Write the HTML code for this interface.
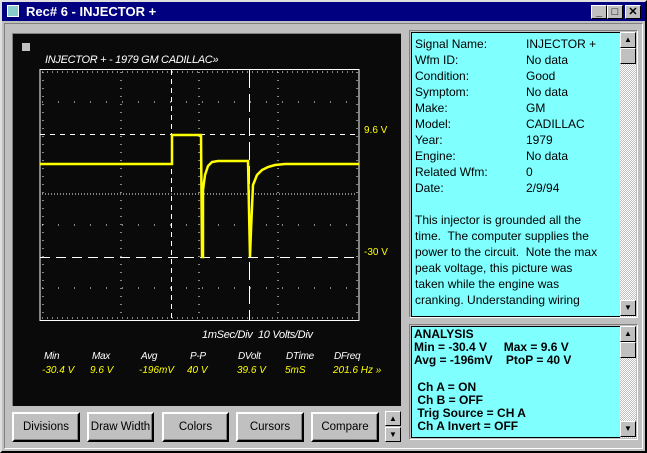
<!DOCTYPE html><html><head><style>
*{margin:0;padding:0;box-sizing:border-box}
body{width:647px;height:453px;background:#c0c0c0;position:relative;overflow:hidden;font-family:"Liberation Sans",sans-serif}
.a{position:absolute}
.tb{left:2px;top:2px;width:643px;height:19px;background:#000080;color:#fff;font-weight:bold;font-size:13px;line-height:19px;padding-left:24px}
.win{left:0;top:0;width:647px;height:453px;border:2px solid;border-color:#dfdfdf #000 #000 #dfdfdf}
.cb{top:5px;width:16px;height:14px;background:#c0c0c0;border:1px solid;border-color:#fff #000 #000 #fff;font-size:11px;text-align:center;line-height:12px;font-weight:bold;color:#000}
.btn{top:412px;height:30px;background:#c0c0c0;border:2px solid;border-color:#fff #000 #000 #fff;box-shadow:inset -1px -1px #808080;font-size:11.5px;text-align:center;line-height:26px;white-space:nowrap}
.scope{left:12px;top:33px;width:389px;height:373px;background:#0a0a0a;border-top:1px solid #808080;border-left:1px solid #808080}
.info{background:#80ffff;border:1px solid #000;font-size:12px;color:#000}
.sb{width:16px;background:repeating-conic-gradient(#c0c0c0 0 25%,#fff 0 50%) 0 0/2px 2px}
.sbb{width:16px;height:16px;background:#c0c0c0;border:1px solid;border-color:#fff #000 #000 #fff;font-size:8px;text-align:center;line-height:14px}
.lab{font-style:italic;font-size:10px;color:#fff;letter-spacing:-.3px}
.val{font-style:italic;font-size:10px;color:#ff0}
</style></head><body>
<div class="a win"></div>
<div class="a tb">Rec# 6 - INJECTOR +</div>
<div class="a" style="left:7px;top:5px;width:12px;height:12px;background:#8cc;border:1px solid #fff"></div>
<div class="a cb" style="left:591px">_</div><div class="a cb" style="left:607px">□</div><div class="a cb" style="left:625px">✕</div>
<div class="a" style="left:4px;top:23px;width:639px;height:426px;border:1px solid;border-color:#808080 #fff #fff #808080"></div>
<div class="a scope"></div>
<div class="a" style="left:22px;top:43px;width:8px;height:8px;background:#c0c0c0"></div>
<div class="a lab" style="left:45px;top:54px;font-size:11px">INJECTOR + - 1979 GM CADILLAC»</div>
<svg class="a" style="left:0;top:0" width="400" height="410">
<rect x="40" y="69.5" width="319" height="251" fill="none" stroke="#fff" stroke-width="1"/>
<g stroke="#fff" stroke-dasharray="1 4" stroke-width="1">
<line x1="42" y1="72" x2="357" y2="72"/>
<line x1="42" y1="102" x2="357" y2="102" stroke-dasharray="1 15"/>
<line x1="42" y1="194" x2="357" y2="194" stroke-dasharray="1 2"/>
<line x1="42" y1="225" x2="357" y2="225" stroke-dasharray="1 15"/>
<line x1="42" y1="288" x2="357" y2="288" stroke-dasharray="1 15"/>
<line x1="42" y1="318" x2="357" y2="318"/>
<line x1="43" y1="72" x2="43" y2="318" stroke-dasharray="1 7"/>
<line x1="121" y1="72" x2="121" y2="318" stroke-dasharray="1 7"/>
<line x1="199" y1="72" x2="199" y2="318" stroke-dasharray="1 7"/>
<line x1="278" y1="72" x2="278" y2="318" stroke-dasharray="1 7"/>
<line x1="357" y1="72" x2="357" y2="318" stroke-dasharray="1 7"/>
</g>
<line x1="171.5" y1="70" x2="171.5" y2="320" stroke="#fff" stroke-dasharray="5 4"/>
<line x1="249.5" y1="70" x2="249.5" y2="320" stroke="#fff" stroke-dasharray="18 6"/>
<line x1="40" y1="134.5" x2="359" y2="134.5" stroke="#fff" stroke-dasharray="5 5"/>
<line x1="40" y1="257.5" x2="359" y2="257.5" stroke="#fff" stroke-dasharray="10 6"/>
<polyline fill="none" stroke="#ff0" stroke-width="2.5" points="40,164 172,164 172,135 201,135 202,257 203,257 203,190 205,175 208,166 212,162 218,161 248,161 249,210 250,257 251,230 253,185 257,175 262,170 268,167 275,165 285,164 359,164"/>
</svg>
<div class="a val" style="left:364px;top:125px;font-style:normal">9.6 V</div>
<div class="a val" style="left:364px;top:247px;font-style:normal">-30 V</div>
<div class="a lab" style="left:202px;top:329px;font-size:11px">1mSec/Div&nbsp; 10 Volts/Div</div>
<div class="a lab" style="left:44px;top:351px">Min</div><div class="a lab" style="left:92px;top:351px">Max</div><div class="a lab" style="left:141px;top:351px">Avg</div><div class="a lab" style="left:190px;top:351px">P-P</div><div class="a lab" style="left:238px;top:351px">DVolt</div><div class="a lab" style="left:286px;top:351px">DTime</div><div class="a lab" style="left:334px;top:351px">DFreq</div>
<div class="a val" style="left:42px;top:365px">-30.4 V</div><div class="a val" style="left:90px;top:365px">9.6 V</div><div class="a val" style="left:139px;top:365px">-196mV</div><div class="a val" style="left:187px;top:365px">40 V</div><div class="a val" style="left:237px;top:365px">39.6 V</div><div class="a val" style="left:285px;top:365px">5mS</div><div class="a val" style="left:333px;top:365px">201.6 Hz »</div>
<div class="a btn" style="left:12px;width:68px">Divisions</div>
<div class="a btn" style="left:87px;width:67px">Draw Width</div>
<div class="a btn" style="left:162px;width:67px">Colors</div>
<div class="a btn" style="left:236px;width:68px">Cursors</div>
<div class="a btn" style="left:311px;width:68px">Compare</div>
<div class="a sbb" style="left:385px;top:411px;height:15px">▲</div>
<div class="a sbb" style="left:385px;top:427px;height:15px">▼</div>
<div class="a" style="left:409px;top:30px;width:229px;height:288px;border:1px solid;border-color:#808080 #fff #fff #808080"></div>
<div class="a info" style="left:411px;top:32px;width:210px;height:285px;padding:3px 0 0 3px;line-height:16px;overflow:hidden">
<div style="position:relative">
<div>Signal Name:<span class="a" style="left:111px">INJECTOR +</span></div>
<div>Wfm ID:<span class="a" style="left:111px">No data</span></div>
<div>Condition:<span class="a" style="left:111px">Good</span></div>
<div>Symptom:<span class="a" style="left:111px">No data</span></div>
<div>Make:<span class="a" style="left:111px">GM</span></div>
<div>Model:<span class="a" style="left:111px">CADILLAC</span></div>
<div>Year:<span class="a" style="left:111px">1979</span></div>
<div>Engine:<span class="a" style="left:111px">No data</span></div>
<div>Related Wfm:<span class="a" style="left:111px">0</span></div>
<div>Date:<span class="a" style="left:111px">2/9/94</span></div>
<div>&nbsp;</div>
<div>This injector is grounded all the<br>time.&nbsp; The computer supplies the<br>power to the circuit.&nbsp; Note the max<br>peak voltage, this picture was<br>taken while the engine was<br>cranking. Understanding wiring</div>
</div></div>
<div class="a sb" style="left:620px;top:32px;height:285px"></div>
<div class="a sbb" style="left:620px;top:32px">▲</div>
<div class="a sbb" style="left:620px;top:48px">&nbsp;</div>
<div class="a sbb" style="left:620px;top:300px">▼</div>
<div class="a" style="left:409px;top:324px;width:229px;height:116px;border:1px solid;border-color:#808080 #fff #fff #808080"></div>
<div class="a info" style="left:411px;top:326px;width:210px;height:112px;padding:1px 0 0 2px;line-height:13.2px;font-weight:bold;font-size:12px;white-space:pre">ANALYSIS
Min = -30.4 V     Max = 9.6 V
Avg = -196mV    PtoP = 40 V

 Ch A = ON
 Ch B = OFF
 Trig Source = CH A
 Ch A Invert = OFF</div>
<div class="a sb" style="left:620px;top:326px;height:112px"></div>
<div class="a sbb" style="left:620px;top:326px">▲</div>
<div class="a sbb" style="left:620px;top:342px">&nbsp;</div>
<div class="a sbb" style="left:620px;top:421px">▼</div>
</body></html>
